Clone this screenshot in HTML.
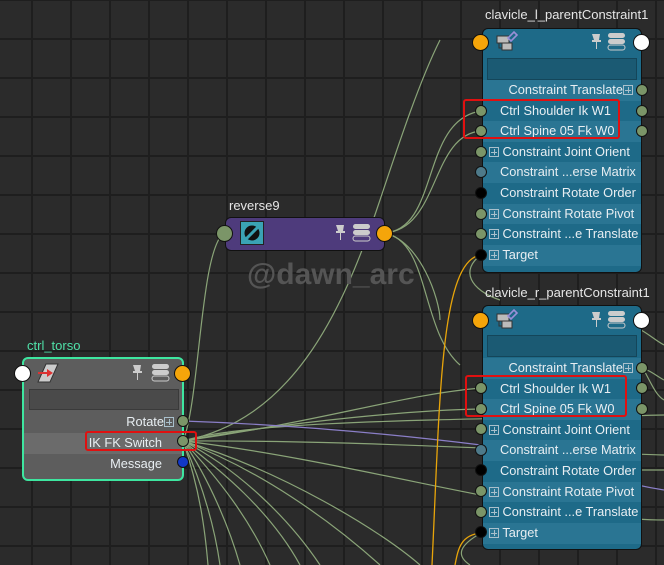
<!DOCTYPE html>
<html><head><meta charset="utf-8"><style>
*{margin:0;padding:0;box-sizing:border-box}
body{width:664px;height:565px;overflow:hidden;position:relative;font-family:"Liberation Sans",sans-serif;
background-color:#2b2b2b;
background-image:linear-gradient(to right,#1e1e1e 0 2px,transparent 2px),linear-gradient(to bottom,#1e1e1e 0 2px,transparent 2px);
background-size:39px 39px;background-position:31px 194px}
.abs{position:absolute}
.title{position:absolute;color:#e6e6e6;font-size:13px;white-space:nowrap}
.node{position:absolute;border:1.5px solid #111;border-radius:6px;overflow:hidden}
.cn{background:#1e6a88;width:160px;height:245px}
.row{position:absolute;left:0;right:0;height:20.6px;font-size:12.8px;color:#e8eef2;line-height:20.6px;white-space:nowrap}
.a{background:#2a7593}.b{background:#1e6a88}
.port{position:absolute;width:12px;height:12px;border-radius:50%;border:1.5px solid #111;background:#7b9568}
.big{width:17px;height:17px}
.plus{display:inline-block;width:10px;height:10px;border:1px solid #a9c0cc;position:relative;vertical-align:-1px}
.plus:before{content:"";position:absolute;left:1px;right:1px;top:3.5px;height:1px;background:#a9c0cc}
.plus:after{content:"";position:absolute;top:1px;bottom:1px;left:3.5px;width:1px;background:#a9c0cc}
.field{position:absolute;background:#1b5a73;border:1px solid #14465a}
.red{position:absolute;border:2px solid #e01010;border-radius:3px}
</style></head><body>

<svg class="abs" style="left:0;top:0" width="664" height="565">
<g fill="none" stroke="#8aa478" stroke-width="1.2">
<path d="M183 441 C290 420 340 320 380 200 C400 140 420 80 440 40"/>
<path d="M183 441 C330 420 400 395 481 388"/>
<path d="M183 441 C300 420 420 410 481 409"/>
<path d="M183 441 C250 420 450 420 664 415"/>
<path d="M183 441 C350 440 500 450 664 455"/>
<path d="M183 441 C350 460 550 520 664 520"/>
<path d="M183 441 C260 470 330 520 380 565"/>
<path d="M183 441 C240 470 290 520 320 565"/>
<path d="M183 441 C220 480 250 520 270 565"/>
<path d="M183 441 C210 480 230 530 240 565"/>
<path d="M183 441 C205 490 215 530 220 565"/>
<path d="M183 441 C200 490 205 530 208 565"/>
<path d="M183 441 C220 470 270 510 300 565"/>
<path d="M183 441 C280 470 380 530 420 565"/>
<path d="M183 441 C200 400 200 250 224 233"/>
<path d="M384 233 C440 230 420 120 481 111"/>
<path d="M384 233 C440 230 430 135 481 131"/>
<path d="M384 233 C430 240 420 330 460 365"/>
<path d="M384 233 C420 240 440 300 440 320"/>
<path d="M481 255 C460 270 470 290 500 300"/>
<path d="M641 330 C650 335 655 340 664 345"/>
<path d="M641 368 C650 370 655 375 664 380"/>
<path d="M641 365 C650 380 655 395 664 400"/>
<path d="M641 470 C650 470 655 470 664 470"/>
<path d="M481 533 C460 545 455 555 470 565"/>
</g>
<path d="M183 421 C300 425 400 435 481 445 C560 460 600 480 664 490" fill="none" stroke="#8b7fc8" stroke-width="1.2"/>
<path d="M481 255 C440 260 440 400 432 565" fill="none" stroke="#e8a50a" stroke-width="1.3"/>
<path d="M481 533 C460 535 458 550 455 565" fill="none" stroke="#e8a50a" stroke-width="1.3"/>
</svg>

<div class="title abs" style="left:247px;top:258px;font-size:30px;font-weight:bold;color:#555">@dawn_arc</div>

<!-- top constraint -->
<div class="title" style="left:485px;top:7px">clavicle_l_parentConstraint1</div>
<div class="node cn" style="left:482px;top:28px">
 <div class="field" style="left:4px;top:29px;width:150px;height:22px"></div>
 <div class="row a" style="top:51px;text-align:right;padding-right:8px">Constraint Translate<span class="plus"></span></div>
 <div class="row b" style="top:72px;padding-left:17px">Ctrl Shoulder Ik W1</div>
 <div class="row a" style="top:92px;padding-left:17px">Ctrl Spine 05 Fk W0</div>
 <div class="row b" style="top:113px;padding-left:6px"><span class="plus"></span> Constraint Joint Orient</div>
 <div class="row a" style="top:133px;padding-left:17px">Constraint ...erse Matrix</div>
 <div class="row b" style="top:154px;padding-left:17px">Constraint Rotate Order</div>
 <div class="row a" style="top:175px;padding-left:6px"><span class="plus"></span> Constraint Rotate Pivot</div>
 <div class="row b" style="top:195px;padding-left:6px"><span class="plus"></span> Constraint ...e Translate</div>
 <div class="row a" style="top:216px;padding-left:6px"><span class="plus"></span> Target</div>
</div>
<!-- bottom constraint -->
<div class="title" style="left:485px;top:285px">clavicle_r_parentConstraint1</div>
<div class="node cn" style="left:482px;top:305px">
 <div class="field" style="left:4px;top:29px;width:150px;height:22px"></div>
 <div class="row a" style="top:52px;text-align:right;padding-right:8px">Constraint Translate<span class="plus"></span></div>
 <div class="row b" style="top:73px;padding-left:17px">Ctrl Shoulder Ik W1</div>
 <div class="row a" style="top:93px;padding-left:17px">Ctrl Spine 05 Fk W0</div>
 <div class="row b" style="top:114px;padding-left:6px"><span class="plus"></span> Constraint Joint Orient</div>
 <div class="row a" style="top:134px;padding-left:17px">Constraint ...erse Matrix</div>
 <div class="row b" style="top:155px;padding-left:17px">Constraint Rotate Order</div>
 <div class="row a" style="top:176px;padding-left:6px"><span class="plus"></span> Constraint Rotate Pivot</div>
 <div class="row b" style="top:196px;padding-left:6px"><span class="plus"></span> Constraint ...e Translate</div>
 <div class="row a" style="top:217px;padding-left:6px"><span class="plus"></span> Target</div>
</div>

<svg class="abs" style="left:495px;top:30px" width="140" height="24">
 <rect x="2" y="6" width="12" height="7" fill="#bbb" stroke="#333"/><rect x="7" y="13" width="10" height="7" fill="#bbb" stroke="#333"/><path d="M4 13v5h3" stroke="#333" fill="none"/>
 <path d="M13 8 l6 -6 l3 3 l-6 6z" fill="none" stroke="#9a8fd8" stroke-width="1.6"/>
 <path d="M97 4h8l-1 6h2v2h-4v7h-1v-7h-4v-2h2z" fill="#ccc"/>
 <rect x="113" y="3" width="17" height="5" rx="2.5" fill="#ccc"/><rect x="113" y="9" width="17" height="5" rx="2.5" fill="#ccc"/><rect x="113" y="15" width="17" height="5" rx="2.5" fill="none" stroke="#ccc"/>
</svg>
<svg class="abs" style="left:495px;top:308px" width="140" height="24">
 <rect x="2" y="6" width="12" height="7" fill="#bbb" stroke="#333"/><rect x="7" y="13" width="10" height="7" fill="#bbb" stroke="#333"/><path d="M4 13v5h3" stroke="#333" fill="none"/>
 <path d="M13 8 l6 -6 l3 3 l-6 6z" fill="none" stroke="#9a8fd8" stroke-width="1.6"/>
 <path d="M97 4h8l-1 6h2v2h-4v7h-1v-7h-4v-2h2z" fill="#ccc"/>
 <rect x="113" y="3" width="17" height="5" rx="2.5" fill="#ccc"/><rect x="113" y="9" width="17" height="5" rx="2.5" fill="#ccc"/><rect x="113" y="15" width="17" height="5" rx="2.5" fill="none" stroke="#ccc"/>
</svg>

<!-- reverse9 -->
<div class="title" style="left:229px;top:198px">reverse9</div>
<div class="node" style="left:225px;top:217px;width:160px;height:34px;background:#4e3b7c"></div>
<svg class="abs" style="left:240px;top:221px" width="140" height="26">
 <rect x="0" y="0" width="24" height="24" fill="#222"/><rect x="1" y="1" width="22" height="22" fill="#3aa3b4"/>
 <circle cx="12" cy="12" r="7.5" fill="#111"/><path d="M3 21 L21 3" stroke="#3aa3b4" stroke-width="3"/>
 <path d="M96 4h8l-1 6h2v2h-4v7h-1v-7h-4v-2h2z" fill="#ccc"/>
 <rect x="113" y="3" width="17" height="5" rx="2.5" fill="#ccc"/><rect x="113" y="9" width="17" height="5" rx="2.5" fill="#ccc"/><rect x="113" y="15" width="17" height="5" rx="2.5" fill="none" stroke="#ccc"/>
</svg>

<!-- ctrl_torso -->
<div class="title" style="left:27px;top:338px;color:#4fe0a8">ctrl_torso</div>
<div class="node" style="left:22px;top:357px;width:162px;height:124px;background:#5d5d5d;border:2.5px solid #3ee6a0">
 <div class="field" style="left:5px;top:30px;width:150px;height:21px;background:#4a4a4a;border-color:#3a3a3a"></div>
 <div class="row" style="top:53px;text-align:right;padding-right:8px;background:#5d5d5d">Rotate<span class="plus"></span></div>
 <div class="row" style="top:74px;text-align:right;padding-right:20px;background:#6b6b6b">IK FK Switch</div>
 <div class="row" style="top:95px;text-align:right;padding-right:20px;background:#5d5d5d">Message</div>
</div>
<svg class="abs" style="left:36px;top:361px" width="140" height="24">
 <path d="M8 3h12l-8 18H0z" fill="#ccc" stroke="#333" transform="translate(2,0)"/>
 <path d="M2 12h12" stroke="#d33" stroke-width="2"/><path d="M11 8l6 4-6 4z" fill="#d33"/>
 <path d="M97 4h8l-1 6h2v2h-4v7h-1v-7h-4v-2h2z" fill="#ccc"/>
 <rect x="116" y="3" width="17" height="5" rx="2.5" fill="#ccc"/><rect x="116" y="9" width="17" height="5" rx="2.5" fill="#ccc"/><rect x="116" y="15" width="17" height="5" rx="2.5" fill="none" stroke="#ccc"/>
</svg>

<!-- ports -->
<div class="port big" style="left:472px;top:34px;background:#f5a50a"></div>
<div class="port big" style="left:633px;top:34px;background:#fff"></div>
<div class="port" style="left:636px;top:84px"></div>
<div class="port" style="left:475px;top:105px"></div><div class="port" style="left:636px;top:105px"></div>
<div class="port" style="left:475px;top:125px"></div><div class="port" style="left:636px;top:125px"></div>
<div class="port" style="left:475px;top:146px"></div>
<div class="port" style="left:475px;top:166px;background:#4e7a8a"></div>
<div class="port" style="left:475px;top:187px;background:#000"></div>
<div class="port" style="left:475px;top:208px"></div>
<div class="port" style="left:475px;top:228px"></div>
<div class="port" style="left:475px;top:249px;background:#000"></div>

<div class="port big" style="left:472px;top:312px;background:#f5a50a"></div>
<div class="port big" style="left:633px;top:312px;background:#fff"></div>
<div class="port" style="left:636px;top:362px"></div>
<div class="port" style="left:475px;top:382px"></div><div class="port" style="left:636px;top:382px"></div>
<div class="port" style="left:475px;top:403px"></div><div class="port" style="left:636px;top:403px"></div>
<div class="port" style="left:475px;top:423px"></div>
<div class="port" style="left:475px;top:444px;background:#4e7a8a"></div>
<div class="port" style="left:475px;top:464px;background:#000"></div>
<div class="port" style="left:475px;top:485px"></div>
<div class="port" style="left:475px;top:506px"></div>
<div class="port" style="left:475px;top:526px;background:#000"></div>

<div class="port big" style="left:216px;top:225px"></div>
<div class="port big" style="left:376px;top:225px;background:#f5a50a"></div>

<div class="port big" style="left:14px;top:365px;background:#fff"></div>
<div class="port big" style="left:174px;top:365px;background:#f5a50a"></div>
<div class="port" style="left:177px;top:415px"></div>
<div class="port" style="left:177px;top:435px"></div>
<div class="port" style="left:177px;top:456px;background:#1238c8"></div>

<div class="red" style="left:463px;top:99px;width:157px;height:40px"></div>
<div class="red" style="left:465px;top:375px;width:162px;height:42px"></div>
<div class="red" style="left:85px;top:431px;width:112px;height:20px"></div>
</body></html>
